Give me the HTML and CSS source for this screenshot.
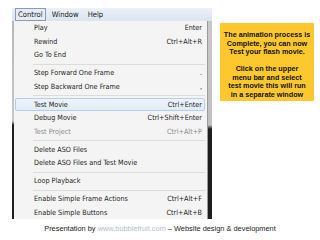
FILE: index.html
```html
<!DOCTYPE html>
<html lang="en">
<head>
    <meta charset="UTF-8">
    <title>Test Movie</title>
    <link rel="stylesheet" href="styles.css">
</head>
<body>
    <div class="slide">
        <div class="shot">
            <div class="menubar">
                <span class="top active">Control</span>
                <span class="top">Window</span>
                <span class="top">Help</span>
            </div>
            <div class="frame">
                <div class="edge"></div>
                <div class="menu">
                    <div class="item"><span>Play</span><span>Enter</span></div>
                    <div class="item"><span>Rewind</span><span>Ctrl+Alt+R</span></div>
                    <div class="item"><span>Go To End</span><span></span></div>
                    <div class="sep"></div>
                    <div class="item"><span>Step Forward One Frame</span><span>.</span></div>
                    <div class="item"><span>Step Backward One Frame</span><span>,</span></div>
                    <div class="sep"></div>
                    <div class="item hover"><span>Test Movie</span><span>Ctrl+Enter</span></div>
                    <div class="item"><span>Debug Movie</span><span>Ctrl+Shift+Enter</span></div>
                    <div class="item off"><span>Test Project</span><span>Ctrl+Alt+P</span></div>
                    <div class="sep"></div>
                    <div class="item"><span>Delete ASO Files</span><span></span></div>
                    <div class="item"><span>Delete ASO Files and Test Movie</span><span></span></div>
                    <div class="sep"></div>
                    <div class="item"><span>Loop Playback</span><span></span></div>
                    <div class="sep"></div>
                    <div class="item"><span>Enable Simple Frame Actions</span><span>Ctrl+Alt+F</span></div>
                    <div class="item"><span>Enable Simple Buttons</span><span>Ctrl+Alt+B</span></div>
                </div>
                <div class="edge right"></div>
            </div>
        </div>
        <div class="note">
            <p>The animation process is<br>Complete, you can now<br>Test your flash movie.</p>
            <p>Click on the upper<br>menu bar and select<br>test movie this will run<br>in a separate window</p>
        </div>
    </div>
    <div class="footer">
        Presentation by <a href="#">www.bubblefruit.com</a> &ndash; Website design &amp; development
    </div>
</body>
</html>
```

FILE: styles.css
```css
body {
    margin: 0;
    padding: 8px 0 0 12px;
    background: #fff;
    font-family: 'Liberation Sans', Arial, sans-serif;
    width: 308px;
    height: 232px;
    overflow: hidden;
}
.slide {
    display: flex;
    align-items: flex-start;
}
.shot {
    width: 200px;
    height: 208px;
    display: flex;
    flex-direction: column;
}
.menubar {
    height: 14px;
    display: flex;
    align-items: center;
    gap: 3px;
    padding-left: 3px;
    background: linear-gradient(#edf1f8, #dbe4f1);
    font-family: 'DejaVu Sans Condensed', 'DejaVu Sans', sans-serif;
    font-size: 7.6px;
    color: #1a1a1a;
}
.top {
    padding: 0 2px;
    line-height: 11px;
    border: 1px solid transparent;
}
.top.active {
    border-color: #8d9bb0;
    background: #e6ecf5;
}
.frame {
    flex: 1;
    display: flex;
}
.edge {
    width: 2px;
    background: linear-gradient(#b8b8b8 0, #c8c8c8 100px, #1e1e1e 104px);
}
.edge.right {
    width: 4px;
    background: linear-gradient(#c9c9c9 0, #c0c0c0 104px, #1e1e1e 108px);
}
.menu {
    flex: 1;
    background: #f4f4f4;
    border-right: 1px solid #9a9a9a;
    padding: 0 2px 0 1px;
    font-family: 'DejaVu Sans Condensed', 'DejaVu Sans', sans-serif;
    font-size: 7.2px;
    color: #1c1c1c;
}
.item {
    height: 13.5px;
    display: flex;
    align-items: center;
    justify-content: space-between;
    padding: 0 2px 0 18px;
    border: 1px solid transparent;
    box-sizing: border-box;
}
.item.hover {
    background: linear-gradient(#eef4fc, #e1ebf8);
    border-color: #b6cdec;
    border-radius: 2px;
}
.item.off {
    color: #8c8c8c;
}
.sep {
    height: 4.5px;
    margin-left: 18px;
    background: linear-gradient(transparent 2px, #dcdcdc 2px, #dcdcdc 3px, transparent 3px);
}
.note {
    margin: 15px 0 0 8px;
    width: 94px;
    height: 78px;
    box-sizing: border-box;
    padding-top: 8px;
    background: #fcc82e;
    text-align: center;
    white-space: nowrap;
    font-size: 7.2px;
    font-weight: bold;
    line-height: 8.5px;
    color: #111;
}
.note p {
    margin: 0 0 8.5px;
}
.footer {
    margin: 8px 0 0 -12px;
    text-align: center;
    font-size: 7.4px;
    color: #222;
}
.footer a {
    color: #b3bccc;
    text-decoration: none;
}
```
